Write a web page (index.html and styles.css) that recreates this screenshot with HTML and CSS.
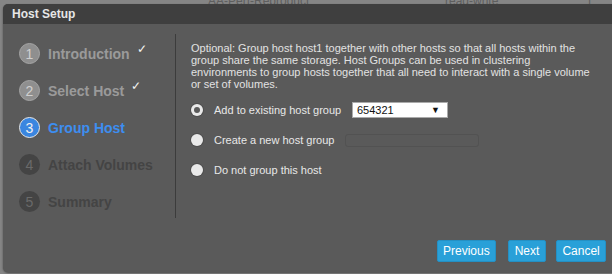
FILE: index.html
```html
<!DOCTYPE html>
<html>
<head>
<meta charset="utf-8">
<link rel="stylesheet" href="styles.css">
</head>
<body>
<div class="backdrop">
  <span class="bg-cell c1">AA-Perf-Reproduct</span>
  <span class="bg-cell c2">read-write</span>
  <span class="bg-cell c3">1</span>
</div>
<div class="dialog">
  <div class="header">Host Setup</div>
  <div class="body">
    <div class="steps">
      <div class="step done"><span class="num">1</span><span class="label">Introduction</span><span class="check">&#10003;</span></div>
      <div class="step done"><span class="num">2</span><span class="label">Select Host</span><span class="check">&#10003;</span></div>
      <div class="step active"><span class="num">3</span><span class="label">Group Host</span></div>
      <div class="step todo"><span class="num">4</span><span class="label">Attach Volumes</span></div>
      <div class="step todo"><span class="num">5</span><span class="label">Summary</span></div>
    </div>
    <div class="content">
      <p class="desc">Optional: Group host host1 together with other hosts so that all hosts within the group share the same storage. Host Groups can be used in clustering environments to group hosts together that all need to interact with a single volume or set of volumes.</p>
      <div class="options">
        <div class="opt">
          <span class="radio checked"></span>
          <span class="opt-label">Add to existing host group</span>
          <span class="select"><span>654321</span><span class="arrow">&#9660;</span></span>
        </div>
        <div class="opt">
          <span class="radio"></span>
          <span class="opt-label">Create a new host group</span>
          <span class="field"></span>
        </div>
        <div class="opt">
          <span class="radio"></span>
          <span class="opt-label">Do not group this host</span>
        </div>
      </div>
    </div>
  </div>
  <div class="footer">
    <button class="btn">Previous</button>
    <button class="btn btn-next">Next</button>
    <button class="btn">Cancel</button>
  </div>
</div>
</body>
</html>
```
FILE: styles.css
```css
html, body {
  margin: 0;
  padding: 0;
}
body {
  width: 612px;
  height: 274px;
  overflow: hidden;
  background: #858585;
  font-family: "Liberation Sans", Arial, sans-serif;
  position: relative;
}
.backdrop {
  height: 12px;
  position: relative;
  color: #5e5e5e;
  font-size: 12px;
}
.bg-cell {
  position: absolute;
  top: -6px;
}
.c1 { left: 208px; }
.c2 { left: 445px; }
.c3 { left: 586px; }
.dialog {
  position: absolute;
  left: 3px;
  top: 4px;
  width: 620px;
  height: 268px;
  background: #5a5a5a;
  border-radius: 5px;
  box-shadow: 0 1px 2px rgba(0,0,0,0.45);
  overflow: hidden;
  display: flex;
  flex-direction: column;
}
.header {
  height: 20px;
  background: #3f3f3f;
  color: #e6e6e6;
  font-weight: bold;
  font-size: 12px;
  line-height: 20px;
  padding-left: 9px;
  flex: none;
}
.body {
  display: flex;
  padding-top: 10px;
  height: 184px;
  flex: none;
}
.steps {
  width: 173px;
  border-right: 1px solid #3c3c3c;
  padding-top: 9px;
  box-sizing: border-box;
  padding-left: 16px;
}
.step {
  display: flex;
  align-items: center;
  height: 21px;
  margin-bottom: 16px;
  font-size: 14px;
  font-weight: bold;
}
.num {
  width: 21px;
  height: 21px;
  border-radius: 50%;
  box-sizing: border-box;
  display: flex;
  align-items: center;
  justify-content: center;
  font-weight: normal;
  font-size: 14px;
  margin-right: 8px;
  flex: none;
}
.done .num {
  background: #8f8f8f;
  color: #cfcfcf;
  border: 1px solid #a5a5a5;
}
.done .label { color: #9a9a9a; }
.check {
  color: #f2f2f2;
  font-size: 12px;
  font-weight: normal;
  margin-left: 7px;
  position: relative;
  top: -5px;
}
.active .num {
  background: #3a86e0;
  color: #f0f0f0;
  border: 1.5px solid #e8e8e8;
}
.active .label { color: #3d8ef0; }
.todo .num {
  background: #444444;
  color: #6a6a6a;
}
.todo .label { color: #444444; }
.content {
  flex: 1;
  padding: 8px 0 0 15px;
}
.desc {
  margin: 0;
  width: 400px;
  font-size: 11px;
  line-height: 12px;
  color: #e2e2e2;
}
.options {
  margin-top: 12px;
  display: flex;
  flex-direction: column;
  gap: 14px;
}
.opt {
  display: flex;
  align-items: center;
  height: 16px;
  font-size: 11px;
  color: #e8e8e8;
}
.radio {
  width: 12px;
  height: 12px;
  border-radius: 50%;
  background: #e9e9e9;
  box-shadow: 0 0 0 1px #4e4e4e;
  margin-right: 11px;
  flex: none;
  position: relative;
}
.radio.checked::after {
  content: "";
  position: absolute;
  left: 3px;
  top: 3px;
  width: 6px;
  height: 6px;
  border-radius: 50%;
  background: #5a5a5a;
}
.opt-label {
  width: 138px;
}
.select {
  width: 96px;
  height: 16px;
  box-sizing: border-box;
  background: #fff;
  border: 1px solid #aaa;
  color: #111;
  display: flex;
  align-items: center;
  justify-content: space-between;
  padding: 0 7px 0 4px;
  font-size: 11px;
}
.arrow { font-size: 9px; }
.field {
  margin-left: -7px;
  width: 134px;
  height: 13px;
  box-sizing: border-box;
  border: 1px solid #525252;
  border-radius: 3px;
  background: #5a5a5a;
}
.footer {
  display: flex;
  gap: 12px;
  padding: 22px 0 0 434px;
}
.btn {
  background: #29a0d8;
  color: #fff;
  border: 1px solid #2490c4;
  border-radius: 2px;
  font-family: "Liberation Sans", Arial, sans-serif;
  font-size: 12px;
  height: 22px;
  padding: 0 5px;
  margin: 0;
}
.btn-next { padding: 0 6px; }
.btn:nth-child(3) { margin-left: -2px; }
```
